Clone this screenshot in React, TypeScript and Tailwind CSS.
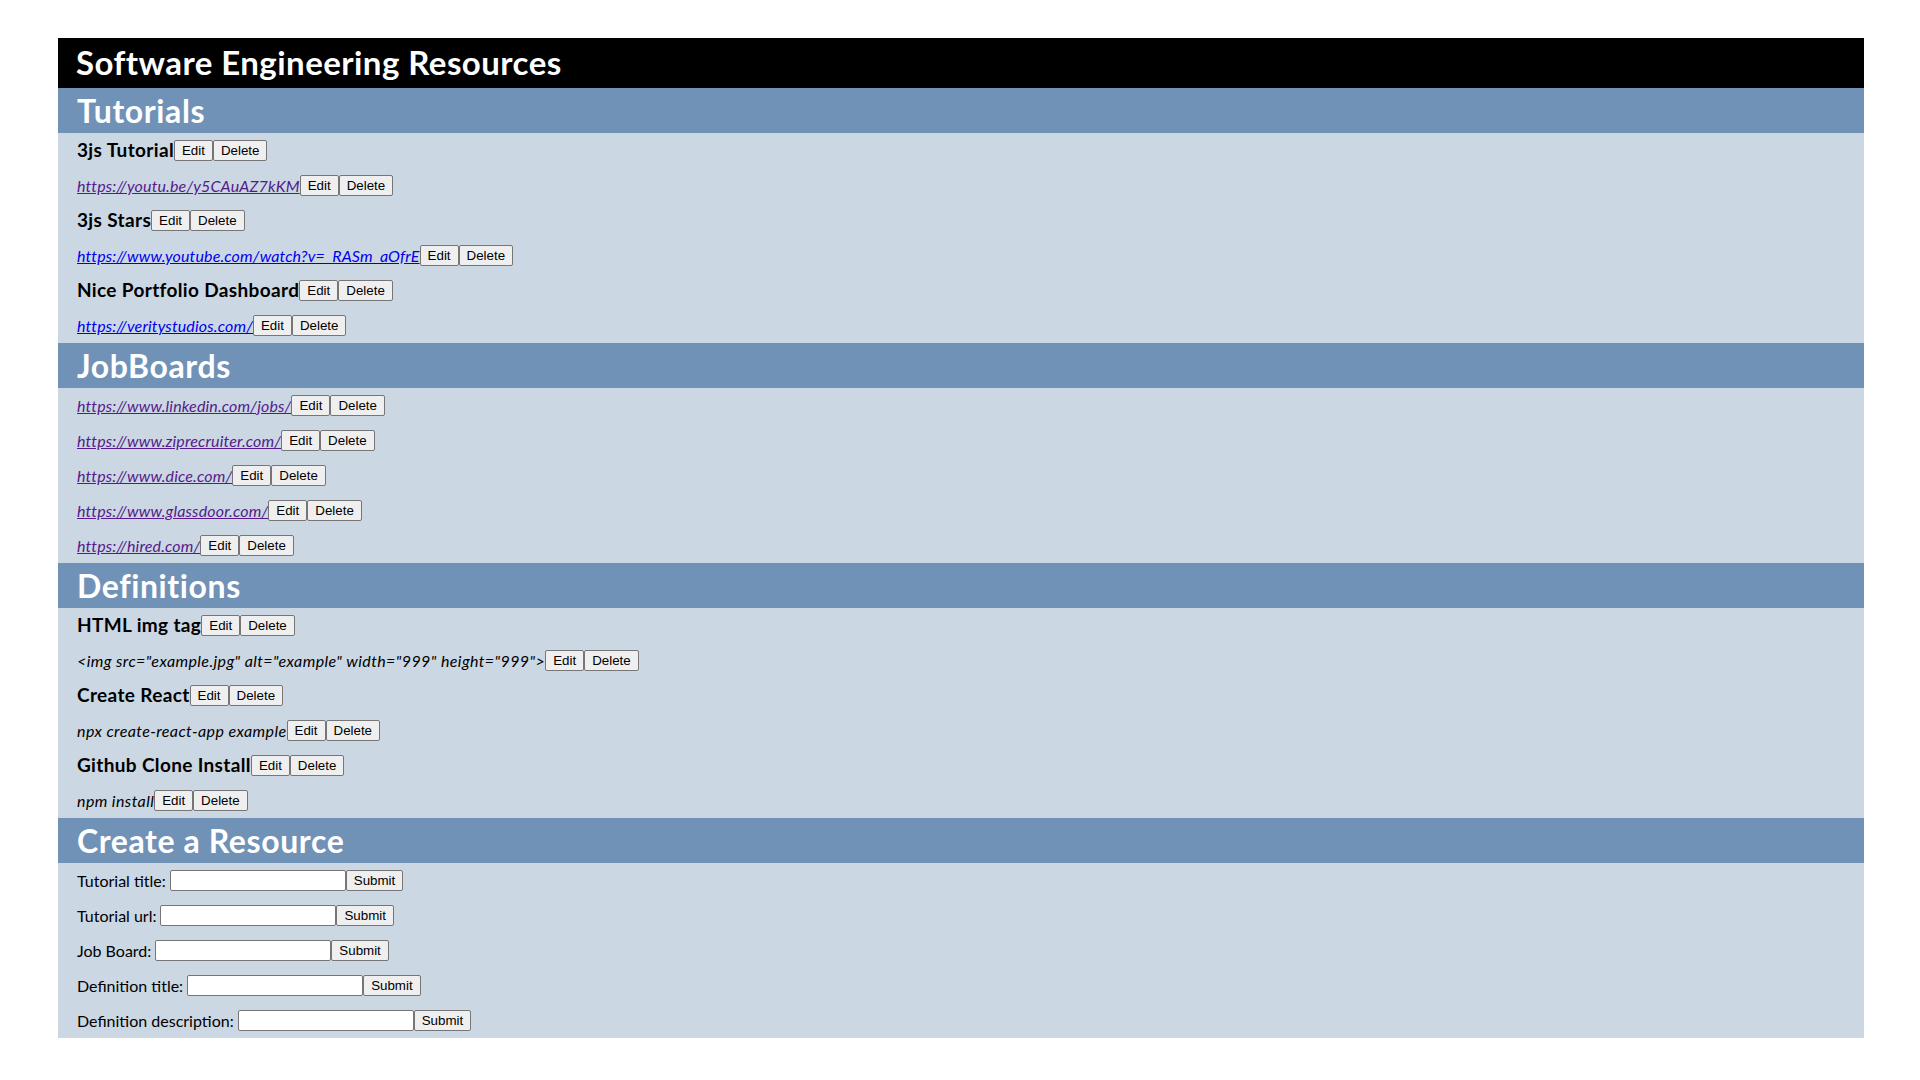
import React from 'react';

const FONT = { fontFamily: 'Lato, "Noto Sans", sans-serif' };

type Item = { text: string; kind: 'title' | 'link' | 'visited' | 'desc' };

const tutorials: Item[] = [
  { text: '3js Tutorial', kind: 'title' },
  { text: 'https://youtu.be/y5CAuAZ7kKM', kind: 'visited' },
  { text: '3js Stars', kind: 'title' },
  { text: 'https://www.youtube.com/watch?v=_RASm_aOfrE', kind: 'link' },
  { text: 'Nice Portfolio Dashboard', kind: 'title' },
  { text: 'https://veritystudios.com/', kind: 'link' },
];

const jobBoards: Item[] = [
  { text: 'https://www.linkedin.com/jobs/', kind: 'visited' },
  { text: 'https://www.ziprecruiter.com/', kind: 'visited' },
  { text: 'https://www.dice.com/', kind: 'visited' },
  { text: 'https://www.glassdoor.com/', kind: 'visited' },
  { text: 'https://hired.com/', kind: 'visited' },
];

const definitions: Item[] = [
  { text: 'HTML img tag', kind: 'title' },
  { text: '<img src="example.jpg" alt="example" width="999" height="999">', kind: 'desc' },
  { text: 'Create React', kind: 'title' },
  { text: 'npx create-react-app example', kind: 'desc' },
  { text: 'Github Clone Install', kind: 'title' },
  { text: 'npm install', kind: 'desc' },
];

const fields = ['Tutorial title:', 'Tutorial url:', 'Job Board:', 'Definition title:', 'Definition description:'];

function NativeButton({ label }: { label: string }) {
  return (
    <button
      type="button"
      className="h-[21px] px-[7px] border border-[#767676] rounded-[2px] bg-[#efefef] text-[13.33px] leading-[15px] text-black"
      style={{ fontFamily: '"Liberation Sans", Arial, sans-serif' }}
    >
      {label}
    </button>
  );
}

function SectionHeader({ title }: { title: string }) {
  return (
    <h2 className="h-[45px] flex items-center pl-[19px] bg-[#7192b7] text-white text-[32px] tracking-[0.6px] font-bold leading-none">
      {title}
    </h2>
  );
}

function ItemRow({ item }: { item: Item }) {
  let content: React.ReactNode;
  if (item.kind === 'title') {
    content = <span className="text-[19px] tracking-[0.35px] font-bold text-black">{item.text}</span>;
  } else if (item.kind === 'desc') {
    content = <span className="text-[16px] tracking-[0.4px] italic text-black">{item.text}</span>;
  } else {
    content = (
      <a
        href="#"
        className={`text-[16px] tracking-[0.15px] italic underline ${item.kind === 'visited' ? 'text-[#551a8b]' : 'text-[#0000ee]'}`}
      >
        {item.text}
      </a>
    );
  }
  return (
    <div className="h-[35px] flex items-center pl-[19px]">
      {content}
      <NativeButton label="Edit" />
      <NativeButton label="Delete" />
    </div>
  );
}

export default function App() {
  return (
    <div className="min-h-screen bg-white pt-[38px] pl-[58px] pr-[56px]" style={FONT}>
      <h1 className="h-[50px] flex items-center pl-[18px] pb-[2px] bg-black text-white text-[33px] tracking-[0.45px] font-bold leading-none">
        Software Engineering Resources
      </h1>

      <SectionHeader title="Tutorials" />
      <div className="bg-[#cbd7e3]">
        {tutorials.map((item, i) => (
          <ItemRow key={i} item={item} />
        ))}
      </div>

      <SectionHeader title="JobBoards" />
      <div className="bg-[#cbd7e3]">
        {jobBoards.map((item, i) => (
          <ItemRow key={i} item={item} />
        ))}
      </div>

      <SectionHeader title="Definitions" />
      <div className="bg-[#cbd7e3]">
        {definitions.map((item, i) => (
          <ItemRow key={i} item={item} />
        ))}
      </div>

      <SectionHeader title="Create a Resource" />
      <div className="bg-[#cbd7e3]">
        {fields.map((label) => (
          <div key={label} className="h-[35px] flex items-center pl-[19px] text-[16px] text-black">
            <span className="mr-[4px]">{label}</span>
            <input type="text" className="w-[176px] h-[21px] bg-white border border-[#767676] rounded-[2px]" />
            <NativeButton label="Submit" />
          </div>
        ))}
      </div>
    </div>
  );
}
